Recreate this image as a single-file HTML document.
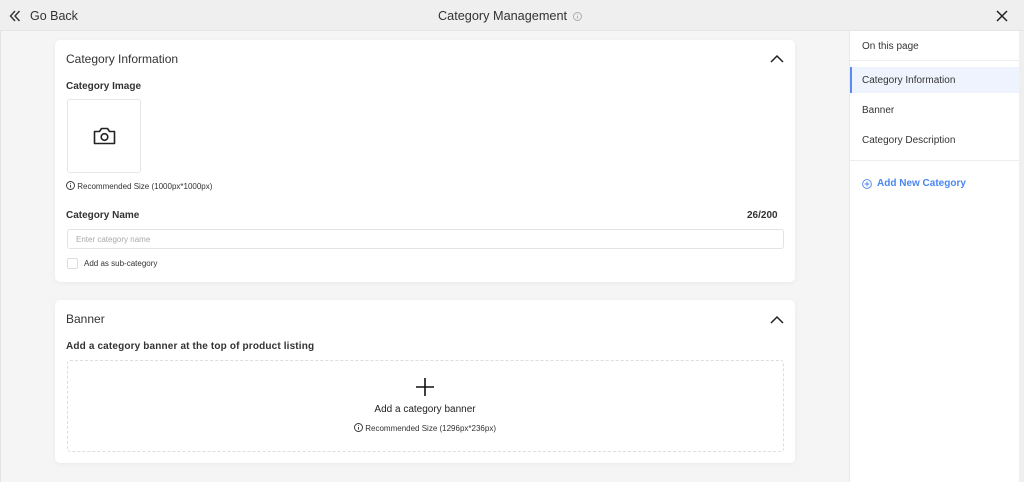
<!DOCTYPE html>
<html><head><style>
*{box-sizing:border-box;margin:0;padding:0}
body{width:1024px;height:482px;overflow:hidden;background:#f5f5f5;font-family:"Liberation Sans",sans-serif;color:#222;position:relative}
.hdr{position:absolute;left:0;top:0;width:1024px;height:31px;background:#efefef;border-bottom:1px solid #e6e6e6}
.abs{position:absolute}
.card{position:absolute;left:55px;width:740px;background:#fff;border-radius:5px;box-shadow:0 1px 6px rgba(0,0,0,.05)}
.side{position:absolute;left:849px;top:31px;width:170px;height:451px;background:#fff;border-left:1px solid #e8e8e8}
.i{vertical-align:-1px}
</style></head><body>
<div class="hdr">
<svg class="abs" style="left:9px;top:10px" width="12" height="12" viewBox="0 0 12 12"><path d="M6 1L1.5 6L6 11M10.5 1L6 6L10.5 11" fill="none" stroke="#333" stroke-width="1.4"/></svg>
<div class="abs" style="left:30px;top:9px;font-size:12.5px;color:#333">Go Back</div>
<div class="abs" style="left:438px;top:9px;font-size:12.7px;color:#333">Category Management</div>
<svg class="abs" style="left:573px;top:12px" width="9" height="9" viewBox="0 0 9 9"><circle cx="4.5" cy="4.5" r="4" fill="none" stroke="#aaa" stroke-width="0.9"/><path d="M4.5 4v2.6M4.5 2.3v0.8" stroke="#aaa" stroke-width="0.9"/></svg>
<svg class="abs" style="left:996px;top:10px" width="12" height="12" viewBox="0 0 12 12"><path d="M1 1L11 11M11 1L1 11" stroke="#222" stroke-width="1.5"/></svg>
</div>
<div class="abs" style="left:0;top:31px;width:1px;height:451px;background:#e3e3e3"></div>
<div class="card" style="top:40px;height:242px">
<div class="abs" style="left:11px;top:12px;font-size:12px;color:#333">Category Information</div>
<svg class="abs" style="left:715px;top:14px" width="14" height="9" viewBox="0 0 14 9"><path d="M1 8L7 2L13 8" fill="none" stroke="#222" stroke-width="1.5"/></svg>
<div class="abs" style="left:11px;top:41px;font-size:10px;font-weight:bold;color:#333">Category Image</div>
<div class="abs" style="left:12px;top:59px;width:74px;height:74px;border:1px solid #e6e6e6;border-radius:3px"></div>
<svg class="abs" style="left:38px;top:87px" width="23" height="18" viewBox="0 0 23 18"><path d="M1.5 4.5h5l2-3h6l2 3h5v12h-20z" fill="none" stroke="#222" stroke-width="1.6" stroke-linejoin="round"/><circle cx="11.5" cy="10" r="3.3" fill="none" stroke="#222" stroke-width="1.6"/></svg>
<div class="abs" style="left:11px;top:141px;font-size:8px;color:#333"><svg class="i" width="9" height="9" viewBox="0 0 9 9"><circle cx="4.5" cy="4.5" r="4" fill="none" stroke="#333" stroke-width="0.9"/><path d="M4.5 4v2.6M4.5 2.3v0.8" stroke="#333" stroke-width="0.9"/></svg> Recommended Size (1000px*1000px)</div>
<div class="abs" style="left:11px;top:170px;font-size:10px;font-weight:bold;color:#333">Category Name</div>
<div class="abs" style="left:692px;top:170px;font-size:10px;font-weight:bold;color:#333">26/200</div>
<div class="abs" style="left:12px;top:189px;width:717px;height:20px;border:1px solid #e3e3e3;border-radius:3px;font-size:8px;color:#aaa;padding:5px 8px">Enter category name</div>
<div class="abs" style="left:12px;top:218px;width:11px;height:11px;border:1px solid #ddd;border-radius:2px"></div>
<div class="abs" style="left:29px;top:219px;font-size:8px;color:#333">Add as sub-category</div>
</div>
<div class="card" style="top:300px;height:163px">
<div class="abs" style="left:11px;top:12px;font-size:12px;color:#333">Banner</div>
<svg class="abs" style="left:715px;top:15px" width="14" height="9" viewBox="0 0 14 9"><path d="M1 8L7 2L13 8" fill="none" stroke="#222" stroke-width="1.5"/></svg>
<div class="abs" style="left:11px;top:41px;font-size:10px;font-weight:bold;color:#333;letter-spacing:0.15px">Add a category banner at the top of product listing</div>
<div class="abs" style="left:12px;top:60px;width:717px;height:92px;border:1px dashed #ddd;border-radius:3px"></div>
<svg class="abs" style="left:361px;top:78px" width="18" height="18" viewBox="0 0 18 18"><path d="M9 0V18M0 9H18" stroke="#111" stroke-width="1.6"/></svg>
<div class="abs" style="left:0;width:740px;text-align:center;top:104px;font-size:10px;color:#222">Add a category banner</div>
<div class="abs" style="left:0;width:740px;text-align:center;top:123px;font-size:8px;color:#333"><svg class="i" width="9" height="9" viewBox="0 0 9 9"><circle cx="4.5" cy="4.5" r="4" fill="none" stroke="#333" stroke-width="0.9"/><path d="M4.5 4v2.6M4.5 2.3v0.8" stroke="#333" stroke-width="0.9"/></svg> Recommended Size (1296px*236px)</div>
</div>
<div class="side">
<div class="abs" style="left:12px;top:10px;font-size:10px;color:#333">On this page</div>
<div class="abs" style="left:0;top:29px;width:170px;height:1px;background:#eee"></div>
<div class="abs" style="left:0;top:36px;width:170px;height:26px;background:#eef3fd;border-left:2px solid #5b8def"></div>
<div class="abs" style="left:12px;top:44px;font-size:10px;color:#333">Category Information</div>
<div class="abs" style="left:12px;top:74px;font-size:10px;color:#333">Banner</div>
<div class="abs" style="left:12px;top:104px;font-size:10px;color:#333">Category Description</div>
<div class="abs" style="left:0;top:129px;width:170px;height:1px;background:#eee"></div>
<svg class="abs" style="left:12px;top:148px" width="10" height="10" viewBox="0 0 10 10"><circle cx="5" cy="5" r="4.4" fill="none" stroke="#4a86f0" stroke-width="0.9"/><path d="M5 2.6v4.8M2.6 5h4.8" stroke="#4a86f0" stroke-width="0.9"/></svg>
<div class="abs" style="left:27px;top:147px;font-size:10px;color:#4a86f0;font-weight:bold">Add New Category</div>
</div>
<div class="abs" style="left:1019px;top:31px;width:5px;height:451px;background:#efefef"></div>
</body></html>
